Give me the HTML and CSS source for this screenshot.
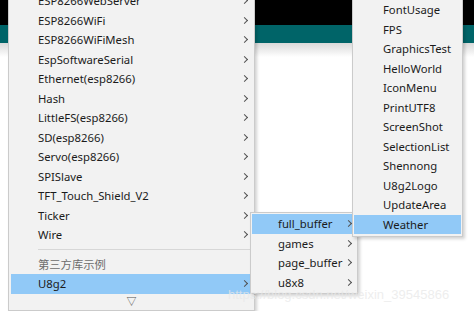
FILE: index.html
```html
<!DOCTYPE html>
<html>
    <head>
        <meta charset="UTF-8">
        <title>Examples menu</title>
        <link rel="stylesheet" href="styles.css">
    </head>
    <body>
        <div class="app">
            <div class="bar-top"></div>
            <div class="bar-teal"></div>
            <div class="editor"></div>
        </div>

        <div class="menu menu-main">
            <div class="item sub">ESP8266WebServer</div>
            <div class="item sub">ESP8266WiFi</div>
            <div class="item sub">ESP8266WiFiMesh</div>
            <div class="item sub">EspSoftwareSerial</div>
            <div class="item sub">Ethernet(esp8266)</div>
            <div class="item sub">Hash</div>
            <div class="item sub">LittleFS(esp8266)</div>
            <div class="item sub">SD(esp8266)</div>
            <div class="item sub">Servo(esp8266)</div>
            <div class="item sub">SPISlave</div>
            <div class="item sub">TFT_Touch_Shield_V2</div>
            <div class="item sub">Ticker</div>
            <div class="item sub">Wire</div>
            <div class="separator"></div>
            <div class="item disabled">第三方库示例</div>
            <div class="item sub active">U8g2</div>
            <div class="more">&#9661;</div>
        </div>

        <div class="menu menu-u8g2">
            <div class="item sub active">full_buffer</div>
            <div class="item sub">games</div>
            <div class="item sub">page_buffer</div>
            <div class="item sub">u8x8</div>
        </div>

        <div class="menu menu-full">
            <div class="item">FontUsage</div>
            <div class="item">FPS</div>
            <div class="item">GraphicsTest</div>
            <div class="item">HelloWorld</div>
            <div class="item">IconMenu</div>
            <div class="item">PrintUTF8</div>
            <div class="item">ScreenShot</div>
            <div class="item">SelectionList</div>
            <div class="item">Shennong</div>
            <div class="item">U8g2Logo</div>
            <div class="item">UpdateArea</div>
            <div class="item active">Weather</div>
        </div>

        <div class="watermark">https://blog.csdn.net/weixin_39545866</div>
    </body>
</html>
```

FILE: styles.css
```css
body{
    margin: 0;
    width: 474px;
    height: 311px;
    overflow: hidden;
    position: relative;
    background: white;
    font-family: "Noto Sans", "Noto Sans CJK SC", sans-serif;
    font-size: 11.3px;
    color: #1b1b1b;
}
.bar-top{
    height: 25px;
    background: #000;
}
.bar-teal{
    height: 18px;
    background: #006468;
}
.editor{
    height: 268px;
    background: linear-gradient(#d9d9d9, #ffffff 14px);
}
.menu{
    position: absolute;
    background: #f2f2f2;
    border: 1px solid #cbcbcb;
    box-shadow: 2px 2px 3px rgba(0,0,0,0.18);
}
.menu-main{
    left: 8px;
    top: -12px;
    width: 241px;
    padding: 2px;
}
.menu-u8g2{
    left: 250px;
    top: 212px;
    width: 104px;
    padding: 1px;
}
.menu-full{
    left: 352px;
    top: -3px;
    width: 107px;
    padding: 2px 1px;
}
.item{
    height: 19.5px;
    line-height: 19.5px;
    padding-left: 27px;
    position: relative;
    white-space: nowrap;
}
.menu-u8g2 .item{
    padding-left: 26px;
}
.menu-full .item{
    padding-left: 29px;
}
.item.active{
    background: #91c9f7;
}
.item.disabled{
    color: #6d6d6d;
}
.item.sub::after{
    content: "";
    position: absolute;
    right: 5px;
    top: 7px;
    width: 4px;
    height: 4px;
    border: solid #505050;
    border-width: 1px 1px 0 0;
    transform: rotate(45deg);
}
.separator{
    height: 10px;
    margin-left: 27px;
    background: linear-gradient(transparent 4px, #d7d7d7 4px, #d7d7d7 5px, transparent 5px);
}
.more{
    height: 14px;
    line-height: 14px;
    text-align: center;
    font-size: 10px;
    color: #555;
}
.watermark{
    position: absolute;
    left: 228px;
    top: 287px;
    font-family: "Liberation Sans", sans-serif;
    font-size: 13px;
    color: rgba(232,232,232,0.75);
}
```
